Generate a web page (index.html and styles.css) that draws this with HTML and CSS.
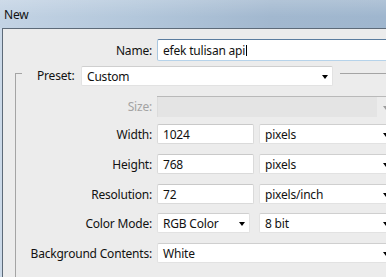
FILE: index.html
```html
<!DOCTYPE html>
<html>
<head>
<meta charset="utf-8">
<link rel="stylesheet" href="styles.css">
</head>
<body>
<div class="titlebar"><span class="title">New</span></div>
<div class="window">
  <div class="row name-row">
    <span class="lbl">Name:</span>
    <div class="input focus">efek tulisan api<span class="caret"></span></div>
  </div>
  <fieldset class="group">
    <legend class="legend">
      <span class="lbl preset-lbl">Preset:</span>
      <div class="select preset"><span class="val">Custom</span><i class="arrow"></i></div>
    </legend>
    <div class="row size-row">
      <span class="lbl disabled">Size:</span>
      <div class="select dis"><span class="dis-fill"></span><span class="dis-btn"><i class="arrow grey"></i></span></div>
    </div>
    <div class="row r-width">
      <span class="lbl">Width:</span>
      <div class="pair">
        <div class="input num">1024</div>
        <div class="select wide"><span class="val">pixels</span><i class="arrow"></i></div>
      </div>
    </div>
    <div class="row r-height">
      <span class="lbl">Height:</span>
      <div class="pair">
        <div class="input num">768</div>
        <div class="select wide"><span class="val">pixels</span><i class="arrow"></i></div>
      </div>
    </div>
    <div class="row r-res">
      <span class="lbl">Resolution:</span>
      <div class="pair">
        <div class="input num">72</div>
        <div class="select wide"><span class="val">pixels/inch</span><i class="arrow"></i></div>
      </div>
    </div>
    <div class="row r-mode">
      <span class="lbl">Color Mode:</span>
      <div class="pair mode">
        <div class="select rgb"><span class="val">RGB Color</span><i class="arrow"></i></div>
        <div class="select wide"><span class="val">8 bit</span><i class="arrow"></i></div>
      </div>
    </div>
    <div class="row r-bg">
      <span class="lbl">Background Contents:</span>
      <div class="select wide"><span class="val">White</span><i class="arrow"></i></div>
    </div>
  </fieldset>
</div>
</body>
</html>
```

FILE: styles.css
```css
html, body {
  margin: 0;
  padding: 0;
}
body {
  width: 386px;
  height: 277px;
  overflow: hidden;
  background: #cbd9e8;
  font-family: "Noto Sans", "Open Sans", sans-serif;
  font-size: 12px;
  letter-spacing: -0.2px;
  color: #111;
}
.titlebar {
  height: 28px;
  display: flex;
  align-items: center;
  padding-left: 4px;
  background: linear-gradient(180deg, rgba(255,255,255,0.18), rgba(255,255,255,0) 60%),
              linear-gradient(90deg, #c3d3e4 0%, #b3c7db 35%, #a2b8cf 70%, #9fb6ce 100%);
}
.title {
  color: #111;
  font-size: 12px;
  margin-top: 1px;
}
.window {
  margin-left: 2px;
  border-left: 1px solid #5d6a78;
  border-top: 1px solid #5d6a78;
  background: #ececec;
  height: 260px;
  overflow: hidden;
}
.row {
  display: grid;
  align-items: center;
  column-gap: 5px;
}
.lbl {
  text-align: right;
  white-space: nowrap;
}
.lbl.disabled {
  color: #a3a3a3;
}
.name-row {
  grid-template-columns: 149px 250px;
  margin-top: 10px;
}
.input {
  box-sizing: border-box;
  height: 20px;
  background: #fff;
  border: 1px solid #dadada;
  border-top-color: #c9c9c9;
  border-radius: 2px;
  padding-left: 5px;
  display: flex;
  align-items: center;
  white-space: nowrap;
}
.input.focus {
  height: 22px;
  border-color: #5b7d9f #a9c7e0 #b6d3ea #a9c7e0;
  border-radius: 2px 0 0 2px;
}
.caret {
  display: inline-block;
  width: 1px;
  height: 11px;
  background: #000;
  margin-left: 1px;
}
.group {
  box-sizing: border-box;
  margin: 5px 0 0 12px;
  padding: 0;
  width: 380px;
  height: 260px;
  border: 1px solid #a4a4a4;
}
.legend {
  margin-left: 6px;
  padding: 0 7px 0 15px;
  height: 14px;
  display: flex;
  align-items: flex-start;
}
.preset-lbl {
  width: 38px;
  margin-right: 6px;
  line-height: 20px;
  text-align: left;
}
.select {
  box-sizing: border-box;
  height: 20px;
  background: #fff;
  border: 1px solid #e2e2e2;
  border-top-color: #cfcfcf;
  border-radius: 2px;
  display: flex;
  align-items: center;
  padding-left: 5px;
  padding-right: 4px;
  white-space: nowrap;
}
.select .val {
  flex: 1;
}
.arrow {
  width: 0;
  height: 0;
  border-left: 3.5px solid transparent;
  border-right: 3.5px solid transparent;
  border-top: 4px solid #000;
  margin-top: 2px;
}
.arrow.grey {
  border-top-color: #9c9c9c;
}
.preset {
  width: 252px;
}
.group .row {
  grid-template-columns: 136px 1fr;
}
.size-row {
  margin-top: 16px;
}
.select.dis {
  height: 21px;
  padding: 0;
  background: #ececec;
  border: none;
  border-top: 1px solid #b9b9b9;
  border-radius: 0;
  align-items: stretch;
}
.dis-fill {
  flex: 1;
  background: #e4e4e4;
  border-left: 1px solid #dcdcdc;
}
.dis-btn {
  width: 17px;
  display: flex;
  align-items: center;
  justify-content: center;
}
.pair {
  display: grid;
  grid-template-columns: 97px 1fr;
  column-gap: 5px;
}
.pair.mode {
  grid-template-columns: 93px 1fr;
  column-gap: 9px;
}
.r-width { margin-top: 7px; }
.r-height { margin-top: 10px; }
.r-res { margin-top: 10px; }
.r-mode { margin-top: 9px; }
.r-bg { margin-top: 10px; }
```
